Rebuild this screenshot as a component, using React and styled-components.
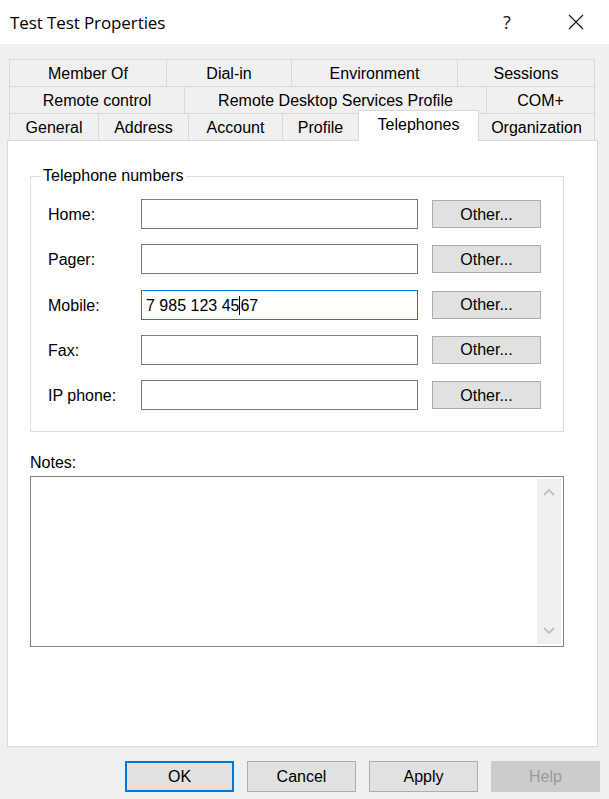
import React from "react";
import styled, { createGlobalStyle } from "styled-components";

const Global = createGlobalStyle`
  html, body { margin: 0; padding: 0; }
  body {
    background: #f0f0f0;
    font-family: "Liberation Sans", Arial, sans-serif;
    font-size: 16px;
    color: #000;
    overflow: hidden;
  }
  * { box-sizing: border-box; }
`;

const Window = styled.div`
  width: 609px;
  height: 799px;
  display: flex;
  flex-direction: column;
  background: #f0f0f0;
`;

const TitleBar = styled.div`
  height: 44px;
  flex: none;
  background: #fff;
  display: flex;
  align-items: center;
  padding-left: 10px;
`;

const Title = styled.div`
  font-family: "Segoe UI", "Open Sans", sans-serif;
  font-size: 17px;
  letter-spacing: -0.1px;
  color: #000;
  flex: 1;
`;

const HelpGlyph = styled.div`
  font-family: "Segoe UI", "Open Sans", sans-serif;
  font-size: 18px;
  width: 66px;
  text-align: center;
  padding-right: 6px;
  color: #111;
`;

const CloseBox = styled.div`
  width: 66px;
  display: flex;
  justify-content: center;
  align-items: center;
`;

const Body = styled.div`
  flex: 1;
  display: flex;
  flex-direction: column;
  padding: 15px 11px 0 7px;
`;

const TabStrip = styled.div`
  display: flex;
  flex-direction: column;
  margin: 0 3px 0 2px;
`;

const TabRow = styled.div`
  display: flex;
  height: 27px;
`;

const Tab = styled.div`
  flex: none;
  height: 27px;
  display: flex;
  align-items: center;
  justify-content: center;
  padding-top: 2px;
  border-top: 1px solid #d9d9d9;
  border-left: 1px solid #d9d9d9;
  background: #f0f0f0;
  white-space: nowrap;
  line-height: 18px;
  &:last-child { border-right: 1px solid #d9d9d9; }
  ${(p) =>
    p.$active &&
    `
    position: relative;
    z-index: 2;
    height: 31px;
    margin-top: -3px;
    background: #fff;
    border-right: 1px solid #d9d9d9;
    padding-top: 0;
    padding-bottom: 3px;
    & + div { border-left: none; }
  `}
`;

const Panel = styled.div`
  height: 607px;
  flex: none;
  background: #fff;
  border: 1px solid #d9d9d9;
  padding: 26px 0 0 22px;
  display: flex;
  flex-direction: column;
`;

const Group = styled.fieldset`
  margin: 0;
  width: 534px;
  min-width: 0;
  border: 1px solid #dcdcdc;
  padding: 14px 0 21px 17px;
  display: flex;
  flex-direction: column;
  gap: 15.25px;
`;

const Legend = styled.legend`
  margin-left: -7px;
  padding: 0 2px;
  line-height: 18px;
`;

const Row = styled.div`
  display: flex;
  align-items: center;
  height: 30px;
`;

const Label = styled.div`
  width: 93px;
  flex: none;
  padding-top: 2px;
`;

const Field = styled.div`
  width: 277px;
  height: 30px;
  flex: none;
  border: 1px solid ${(p) => (p.$focused ? "#0078d7" : "#7a7a7a")};
  background: #fff;
  display: flex;
  align-items: center;
  padding-left: 4px;
  padding-top: 2px;
  white-space: nowrap;
`;

const Caret = styled.span`
  display: inline-block;
  width: 1px;
  height: 19px;
  background: #000;
  vertical-align: middle;
`;

const Button = styled.div`
  flex: none;
  width: 109px;
  height: ${(p) => p.$h || 28}px;
  display: flex;
  align-items: center;
  justify-content: center;
  padding-top: 1px;
  background: ${(p) => (p.$disabled ? "#cccccc" : "#e1e1e1")};
  border: ${(p) =>
    p.$default ? "2px solid #0078d7" : p.$disabled ? "1px solid #cccccc" : "1px solid #adadad"};
  color: ${(p) => (p.$disabled ? "#9a9a9a" : "#000")};
`;

const OtherButton = styled(Button)`
  margin-left: 14px;
`;

const NotesLabel = styled.div`
  margin-top: 22px;
  line-height: 18px;
`;

const Notes = styled.div`
  margin-top: 4px;
  width: 534px;
  height: 171px;
  border: 1px solid #828282;
  padding: 2px;
  display: flex;
  justify-content: flex-end;
`;

const ScrollTrack = styled.div`
  width: 24px;
  background: #f0f0f0;
  display: flex;
  flex-direction: column;
  justify-content: space-between;
  align-items: center;
  padding: 9px 0 9px;
`;

const ButtonBar = styled.div`
  display: flex;
  justify-content: flex-end;
  gap: 13px;
  margin-top: 14px;
  margin-right: -2px;
`;

const Chevron = ({ up }) => (
  <svg width="12" height="8" viewBox="0 0 12 8">
    <path
      d={up ? "M1 7 L6 2 L11 7" : "M1 1 L6 6 L11 1"}
      fill="none"
      stroke="#bfbfbf"
      strokeWidth="1.8"
    />
  </svg>
);

const tabRows = [
  [
    { label: "Member Of", w: 157 },
    { label: "Dial-in", w: 125 },
    { label: "Environment", w: 166 },
    { label: "Sessions", w: 138 },
  ],
  [
    { label: "Remote control", w: 175 },
    { label: "Remote Desktop Services Profile", w: 302 },
    { label: "COM+", w: 109 },
  ],
  [
    { label: "General", w: 89 },
    { label: "Address", w: 90 },
    { label: "Account", w: 94 },
    { label: "Profile", w: 76 },
    { label: "Telephones", w: 121, active: true },
    { label: "Organization", w: 116 },
  ],
];

const phones = [
  { label: "Home:" },
  { label: "Pager:" },
  { label: "Mobile:", value: true },
  { label: "Fax:" },
  { label: "IP phone:" },
];

export default function App() {
  return (
    <Window>
      <Global />
      <TitleBar>
        <Title>Test Test Properties</Title>
        <HelpGlyph>?</HelpGlyph>
        <CloseBox>
          <svg width="16" height="16" viewBox="0 0 16 16">
            <path d="M1 1 L15 15 M15 1 L1 15" stroke="#111" strokeWidth="1.1" fill="none" />
          </svg>
        </CloseBox>
      </TitleBar>
      <Body>
        <TabStrip>
          {tabRows.map((row, i) => (
            <TabRow key={i}>
              {row.map((t) => (
                <Tab key={t.label} $active={t.active} style={{ width: t.w }}>
                  {t.label}
                </Tab>
              ))}
            </TabRow>
          ))}
        </TabStrip>
        <Panel>
          <Group>
            <Legend>Telephone numbers</Legend>
            {phones.map((p) => (
              <Row key={p.label}>
                <Label>{p.label}</Label>
                <Field $focused={p.value}>
                  {p.value && (
                    <>
                      7 985 123 45<Caret />67
                    </>
                  )}
                </Field>
                <OtherButton>Other...</OtherButton>
              </Row>
            ))}
          </Group>
          <NotesLabel>Notes:</NotesLabel>
          <Notes>
            <ScrollTrack>
              <Chevron up />
              <Chevron />
            </ScrollTrack>
          </Notes>
        </Panel>
        <ButtonBar>
          <Button $h={31} $default>OK</Button>
          <Button $h={31}>Cancel</Button>
          <Button $h={31}>Apply</Button>
          <Button $h={31} $disabled>Help</Button>
        </ButtonBar>
      </Body>
    </Window>
  );
}
